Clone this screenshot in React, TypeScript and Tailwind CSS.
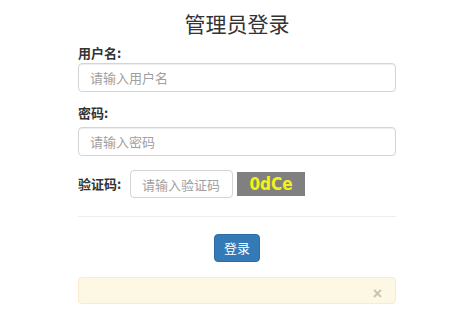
import React from 'react';

export default function App() {
  const font = { fontFamily: '"Noto Sans CJK SC", "Liberation Sans", sans-serif' };
  return (
    <div className="min-h-[325px] w-full bg-white text-[#333]" style={font}>
      <div className="mx-auto w-[318px] pt-[8px]">
        <h1 className="text-center text-[21px] leading-[30px] font-normal text-[#333]">管理员登录</h1>

        <label className="mt-[6px] block text-[13px] font-bold leading-[18px]">用户名:</label>
        <input
          className="mt-px block h-[29px] w-full rounded-[4px] border border-[#d4d4d4] px-[11px] text-[13px] outline-none placeholder:text-[#a0a0a0] shadow-[inset_0_1px_1px_rgba(0,0,0,0.075)]"
          placeholder="请输入用户名"
        />

        <label className="mt-[12px] block text-[13px] font-bold leading-[18px]">密码:</label>
        <input
          type="text"
          className="mt-[5px] block h-[29px] w-full rounded-[4px] border border-[#d4d4d4] px-[11px] text-[13px] outline-none placeholder:text-[#a0a0a0] shadow-[inset_0_1px_1px_rgba(0,0,0,0.075)]"
          placeholder="请输入密码"
        />

        <div className="mt-[14px] flex h-[28px] items-center">
          <span className="w-[52px] text-[13px] font-bold">验证码:</span>
          <input
            className="h-[28px] w-[103px] rounded-[4px] border border-[#d4d4d4] px-[11px] text-[13px] outline-none placeholder:text-[#a0a0a0]"
            placeholder="请输入验证码"
          />
          <div className="ml-[4px] flex h-[24px] w-[68px] items-center justify-center bg-[#808080]">
            <span
              className="text-[17px] leading-[20px] font-bold text-[#f2f21a]"
              style={{ fontFamily: '"DejaVu Sans Condensed", "DejaVu Sans", sans-serif', fontStretch: 'condensed' }}
            >
              0dCe
            </span>
          </div>
        </div>

        <hr className="mt-[18px] border-0 border-t border-[#eee]" />

        <div className="mt-[17px] flex justify-center">
          <button className="h-[28px] w-[46px] rounded-[4px] border border-[#2e6da4] bg-[#337ab7] text-[13px] text-white">
            登录
          </button>
        </div>

        <div className="mt-[15px] flex h-[27px] items-end justify-end rounded-[4px] border border-[#faebcc] bg-[#fcf8e3] pr-[13px]">
          <span className="mb-[1px] text-[16px] leading-[16px] font-bold text-[#c8c2b4]" style={{ fontFamily: '"Liberation Sans", sans-serif' }}>
            ×
          </span>
        </div>
      </div>
    </div>
  );
}
